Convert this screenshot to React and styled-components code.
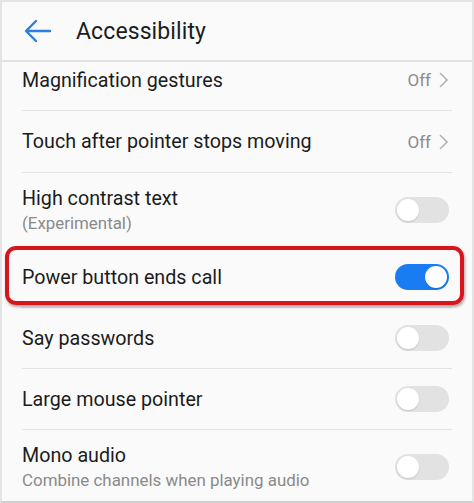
import React from 'react';
import styled, { createGlobalStyle } from 'styled-components';

const GlobalStyle = createGlobalStyle`
  html, body {
    margin: 0;
    padding: 0;
    background: #ffffff;
  }
  body {
    font-family: Roboto, "Noto Sans", "Liberation Sans", sans-serif;
  }
`;

const Screen = styled.div`
  width: 474px;
  height: 503px;
  box-sizing: border-box;
  border: 2px solid #e4e4e4;
  border-bottom-color: #cfcfcf;
  background: #fafafa;
  overflow: hidden;
  display: flex;
  flex-direction: column;
`;

const Header = styled.div`
  height: 58px;
  flex-shrink: 0;
  display: flex;
  align-items: center;
  gap: 24px;
  padding-left: 22px;
  border-bottom: 2px solid #e2e2e2;
  background: #fafafa;
`;

const Title = styled.h1`
  margin: 0;
  font-size: 23px;
  font-weight: 400;
  color: #1c1c1c;
  letter-spacing: 0.1px;
`;

// the list is scrolled a little, so its first row sits partly under the header
const Viewport = styled.div`
  flex: 1;
  overflow: hidden;
`;

const List = styled.div`
  display: flex;
  flex-direction: column;
  padding: 0 20px;
  margin-top: -12px;
`;

const Row = styled.div`
  position: relative;
  height: ${(p) => p.$h}px;
  flex-shrink: 0;
  display: flex;
  align-items: center;
  justify-content: space-between;
  border-bottom: ${(p) => (p.$last ? 'none' : '1px solid #e3e3e3')};
  box-sizing: border-box;
`;

const Texts = styled.div`
  display: flex;
  flex-direction: column;
  gap: 3px;
`;

const Label = styled.div`
  font-size: 19.7px;
  color: #1c1c1c;
  line-height: 23px;
`;

const Sub = styled.div`
  font-size: 16.9px;
  color: #8a8a8a;
  line-height: 20px;
`;

const Value = styled.div`
  display: flex;
  align-items: center;
  gap: 8px;
  font-size: 17px;
  color: #8c8c8c;
  padding-right: 4px;
`;

const Track = styled.div`
  position: relative;
  width: 54px;
  height: 26px;
  border-radius: 13px;
  background: ${(p) => (p.$on ? '#1a7cf2' : '#e2e2e2')};
  margin-right: 3px;
`;

const Knob = styled.div`
  position: absolute;
  top: 2px;
  left: ${(p) => (p.$on ? '30px' : '2px')};
  width: 22px;
  height: 22px;
  border-radius: 50%;
  background: #ffffff;
  box-shadow: 0 1px 2px rgba(0, 0, 0, 0.12);
`;

const Highlight = styled.div`
  position: absolute;
  left: -17px;
  right: -12px;
  top: -1px;
  bottom: 2px;
  border: 4px solid #d8141c;
  border-radius: 11px;
  box-shadow: 1px 2px 3px rgba(0, 0, 0, 0.35);
  pointer-events: none;
`;

const BackArrow = () => (
  <svg width="28" height="24" viewBox="0 0 28 24" fill="none">
    <path
      d="M26 12H3M12 2L2 12l10 10"
      stroke="#2b7fe0"
      strokeWidth="2.4"
      strokeLinecap="round"
      strokeLinejoin="round"
    />
  </svg>
);

const Chevron = () => (
  <svg width="9" height="16" viewBox="0 0 9 16" fill="none">
    <path d="M1 1l7 7-7 7" stroke="#b5b5b5" strokeWidth="1.6" />
  </svg>
);

const Switch = ({ on }) => (
  <Track $on={on}>
    <Knob $on={on} />
  </Track>
);

const items = [
  { label: 'Magnification gestures', value: 'Off', h: 61 },
  { label: 'Touch after pointer stops moving', value: 'Off', h: 62 },
  { label: 'High contrast text', sub: '(Experimental)', on: false, h: 74 },
  { label: 'Power button ends call', on: true, h: 61, marked: true },
  { label: 'Say passwords', on: false, h: 61 },
  { label: 'Large mouse pointer', on: false, h: 61 },
  { label: 'Mono audio', sub: 'Combine channels when playing audio', on: false, h: 74, last: true },
];

export default function App() {
  return (
    <>
      <GlobalStyle />
      <Screen>
        <Header>
          <BackArrow />
          <Title>Accessibility</Title>
        </Header>
        <Viewport>
          <List>
            {items.map((it) => (
              <Row key={it.label} $h={it.h} $last={it.last}>
                <Texts>
                  <Label>{it.label}</Label>
                  {it.sub && <Sub>{it.sub}</Sub>}
                </Texts>
                {it.value ? (
                  <Value>
                    {it.value}
                    <Chevron />
                  </Value>
                ) : (
                  <Switch on={it.on} />
                )}
                {it.marked && <Highlight />}
              </Row>
            ))}
          </List>
        </Viewport>
      </Screen>
    </>
  );
}
